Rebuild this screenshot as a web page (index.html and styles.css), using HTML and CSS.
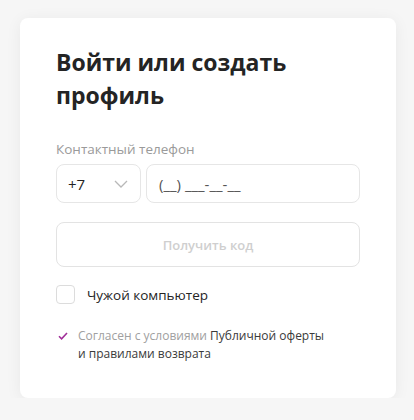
FILE: index.html
```html
<!DOCTYPE html>
<html lang="ru">
<head>
    <meta charset="UTF-8">
    <meta name="viewport" content="width=device-width, initial-scale=1.0">
    <title>Вход</title>
    <link rel="stylesheet" href="styles.css">
</head>
<body>
    <div class="card">
        <h1 class="title">Войти или создать профиль</h1>
        <div class="label">Контактный телефон</div>
        <div class="phone-row">
            <div class="code-select">
                <span>+7</span>
                <svg class="chevron" width="14" height="8" viewBox="0 0 14 8"><path d="M1 1l6 6 6-6" fill="none" stroke="#b8b8b8" stroke-width="1.3"/></svg>
            </div>
            <div class="phone-input">(__) ___-__-__</div>
        </div>
        <button class="get-code" disabled>Получить код</button>
        <label class="remember">
            <span class="box"></span>
            <span>Чужой компьютер</span>
        </label>
        <div class="agree">
            <svg class="tick" width="10" height="8" viewBox="0 0 10 8"><path d="M1 4.2l2.6 2.6L9 1" fill="none" stroke="#a12f99" stroke-width="1.6"/></svg>
            <p>Согласен с условиями <span class="link">Публичной оферты</span><br><span class="link">и правилами возврата</span></p>
        </div>
    </div>
</body>
</html>
```

FILE: styles.css
```css
body {
    margin: 0;
    background-color: #f6f6f6;
    font-family: "Open Sans", "Noto Sans", sans-serif;
    color: #242424;
}
.card {
    width: 376px;
    height: 380px;
    box-sizing: border-box;
    margin: 18px 0 0 20px;
    padding: 28px 36px 0 36px;
    background: #fff;
    border-radius: 8px;
    box-shadow: 0 2px 16px rgba(0, 0, 0, 0.06);
}
.title {
    margin: 0;
    width: 260px;
    font-size: 23px;
    line-height: 33px;
    font-weight: 700;
    color: #242424;
}
.label {
    margin-top: 27px;
    font-size: 13.5px;
    color: #9a9a9a;
    line-height: 20px;
}
.phone-row {
    display: flex;
    gap: 5px;
    margin-top: 5px;
}
.code-select,
.phone-input {
    height: 39px;
    box-sizing: border-box;
    border: 1px solid #e6e6e6;
    border-radius: 8px;
    display: flex;
    align-items: center;
    font-size: 15px;
}
.code-select {
    width: 85px;
    padding: 0 12px 0 11px;
    justify-content: space-between;
}
.phone-input {
    flex: 1;
    padding: 0 12px;
    color: #555;
}
.get-code {
    display: block;
    width: 100%;
    height: 45px;
    margin-top: 19px;
    border: 1px solid #e3e3e3;
    border-radius: 8px;
    background: #fff;
    font-family: inherit;
    font-size: 13px;
    font-weight: 600;
    color: #cfcfcf;
}
.remember {
    display: flex;
    align-items: center;
    gap: 12px;
    margin-top: 18px;
    font-size: 13.5px;
    color: #242424;
}
.box {
    width: 19px;
    height: 19px;
    box-sizing: border-box;
    border: 1px solid #dcdcdc;
    border-radius: 4px;
}
.agree {
    display: flex;
    gap: 10px;
    margin-top: 23px;
    padding-left: 2px;
}
.tick {
    margin-top: 5px;
    flex-shrink: 0;
}
.agree p {
    margin: 0;
    font-size: 12px;
    line-height: 18px;
    color: #a0a0a0;
}
.link {
    color: #3a3a3a;
}
```
